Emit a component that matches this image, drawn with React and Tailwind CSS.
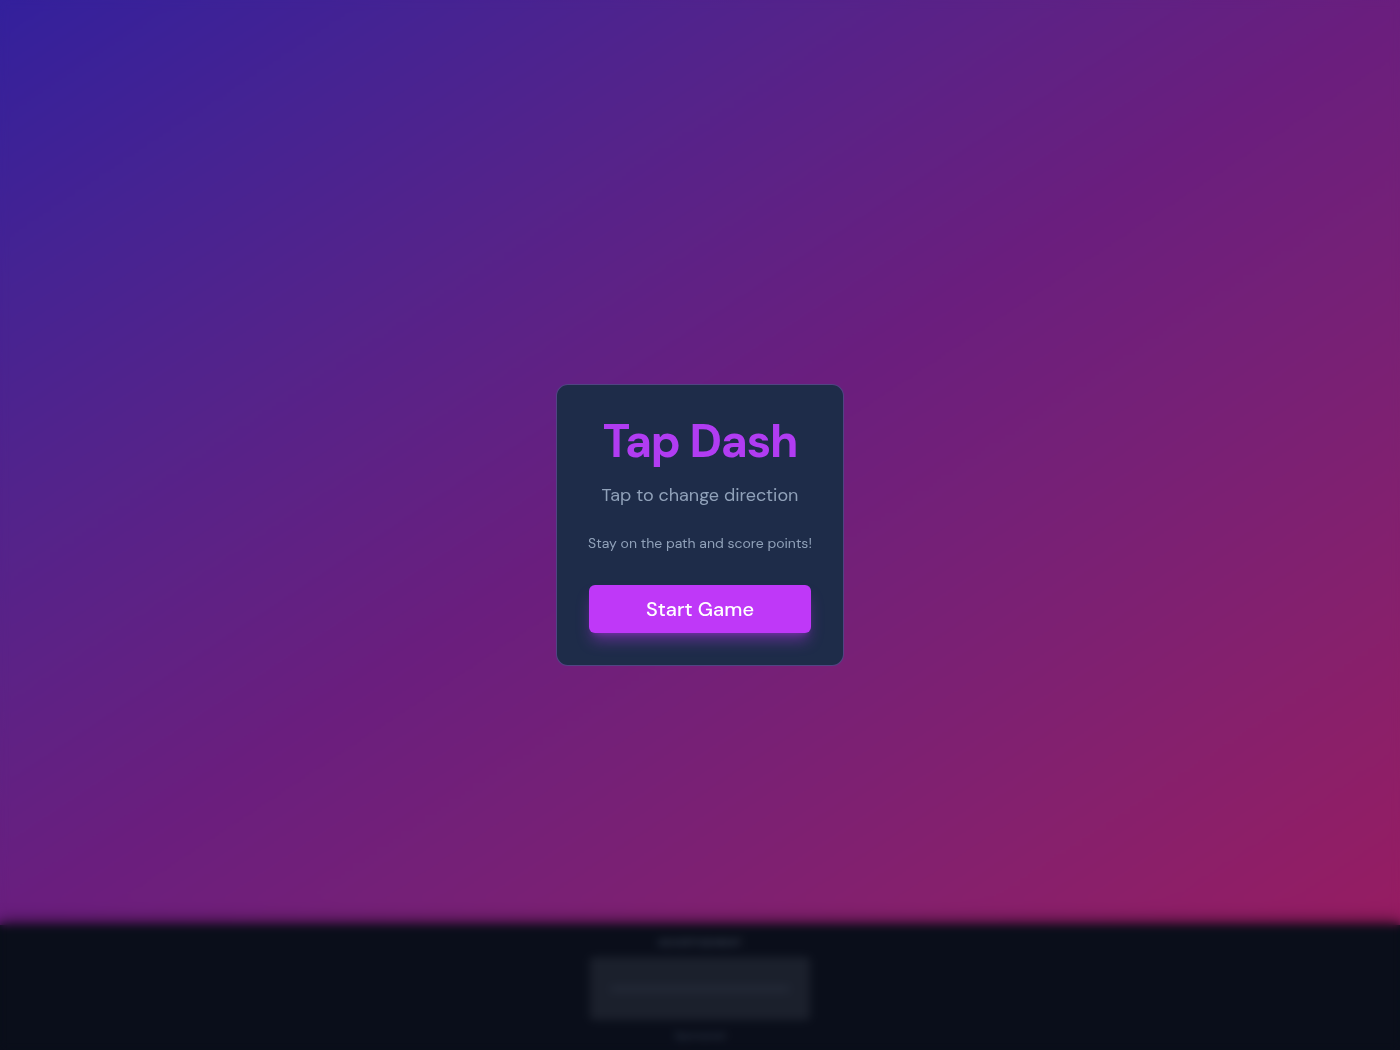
export default function App() {
	return (
		<div
			className="relative h-screen w-full overflow-hidden flex flex-col"
			style={{ fontFamily: '"DM Sans", Inter, "Noto Sans", sans-serif' }}
		>
			{/* game area */}
			<div className="flex-1 bg-gradient-to-br from-[#33209c] via-[#6a1e7e] to-[#961c62]" />

			{/* ad slot */}
			<div className="h-[125px] bg-[#0a0e1a] flex flex-col items-center pt-3 shadow-[0_-4px_12px_rgba(0,0,0,0.6)]">
				<span className="text-[10px] leading-3 text-gray-600 uppercase tracking-wider">Advertisement</span>
				<div className="mt-2 w-[220px] h-[63px] rounded bg-[#1b202c] flex flex-col justify-center px-5 gap-2">
					<div className="h-1.5 w-full rounded bg-[#232937]" />
				</div>
				<span className="mt-2 text-[10px] text-gray-700">Sponsored</span>
			</div>

			{/* start overlay */}
			<div className="absolute inset-0 backdrop-blur-[4px] flex items-center justify-center">
				<div className="w-[288px] rounded-xl border border-[#5e4b92]/80 bg-[#1e2c49] p-8 flex flex-col items-center text-center">
					<h1 className="text-[46px] leading-[48px] font-bold text-[#b13cf2] tracking-tight">Tap Dash</h1>
					<p className="mt-4 text-lg text-slate-400">Tap to change direction</p>
					<p className="mt-6 text-sm leading-5 whitespace-nowrap text-slate-400">
						Stay on the path and score points!
					</p>
					<button className="mt-8 w-full h-12 rounded-md bg-[#bf38f8] text-white text-xl font-medium shadow-lg shadow-[#bf38f8]/40">
						Start Game
					</button>
				</div>
			</div>
		</div>
	);
}
